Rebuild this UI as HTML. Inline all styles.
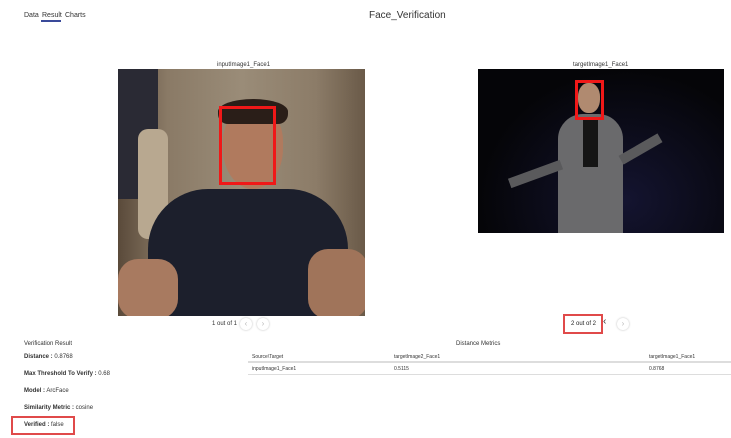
<!DOCTYPE html><html><head><style>
body{margin:0;width:731px;height:438px;background:#fff;font-family:"Liberation Sans",sans-serif;position:relative;overflow:hidden;color:#333}
.a{position:absolute;white-space:nowrap}
.s{font-size:6px}
.b{font-weight:bold}
.circ{position:absolute;width:12px;height:12px;border-radius:50%;background:#fff;box-shadow:0 0 2px #bbb;font-size:8px;color:#bbb;text-align:center;line-height:12px}
</style></head><body>
<div class="a" style="left:24px;top:12px;font-size:7px">Data</div>
<div class="a" style="left:42px;top:12px;font-size:7px;color:#333">Result</div>
<div style="position:absolute;left:41px;top:20px;width:20px;height:1.5px;background:#3a4a9a"></div>
<div class="a" style="left:65px;top:12px;font-size:7px">Charts</div>
<div class="a" style="left:369px;top:10px;font-size:10px;color:#333">Face_Verification</div>

<div class="a s" style="left:217px;top:62px">inputImage1_Face1</div>
<div style="position:absolute;left:118px;top:69px;width:247px;height:247px;background:linear-gradient(90deg,#5a4a3a 0%,#8a7a66 20%,#9a8c78 50%,#8c7c68 80%,#6a5a48 100%);overflow:hidden">
 <div style="position:absolute;left:0;top:0;width:40px;height:130px;background:#2a2a34"></div>
 <div style="position:absolute;left:20px;top:60px;width:30px;height:110px;background:#b8a890;border-radius:10px"></div>
 <div style="position:absolute;left:30px;top:120px;width:200px;height:140px;background:#1c1f2c;border-radius:60px 60px 0 0"></div>
 <div style="position:absolute;left:0;top:190px;width:60px;height:60px;background:#a87a60;border-radius:20px"></div>
 <div style="position:absolute;left:190px;top:180px;width:60px;height:70px;background:#a0745a;border-radius:20px"></div>
 <div style="position:absolute;left:105px;top:40px;width:60px;height:80px;background:#b07a5e;border-radius:40% 40% 50% 50%"></div>
 <div style="position:absolute;left:100px;top:30px;width:70px;height:25px;background:#2a1e18;border-radius:50% 50% 10px 10px"></div>
 <div style="position:absolute;left:101px;top:37px;width:57px;height:79px;border:3px solid #f01818;box-sizing:border-box"></div>
</div>
<div class="a s" style="left:212px;top:321px">1 out of 1</div>
<div class="circ" style="left:240px;top:318px">‹</div>
<div class="circ" style="left:257px;top:318px">›</div>

<div class="a s" style="left:573px;top:62px">targetImage1_Face1</div>
<div style="position:absolute;left:478px;top:69px;width:246px;height:164px;background:radial-gradient(ellipse at 60% 80%,#141430,#050508 70%);overflow:hidden">
 <div style="position:absolute;left:80px;top:45px;width:65px;height:120px;background:#6a6a6c;border-radius:25px 25px 0 0"></div>
 <div style="position:absolute;left:105px;top:48px;width:15px;height:50px;background:#151515"></div>
 <div style="position:absolute;left:30px;top:100px;width:55px;height:10px;background:#5a5a5c;transform:rotate(-20deg)"></div>
 <div style="position:absolute;left:140px;top:75px;width:45px;height:10px;background:#5a5a5c;transform:rotate(-30deg)"></div>
 <div style="position:absolute;left:100px;top:14px;width:22px;height:30px;background:#b08a70;border-radius:45%"></div>
 <div style="position:absolute;left:97px;top:11px;width:29px;height:40px;border:3px solid #f01818;box-sizing:border-box"></div>
</div>
<div style="position:absolute;left:563px;top:314px;width:40px;height:20px;border:2px solid #e04a4a;box-sizing:border-box"></div>
<div class="a s" style="left:571px;top:321px;color:#222">2 out of 2</div>
<div class="a" style="left:603px;top:316px;font-size:10px;color:#333">‹</div>
<div class="circ" style="left:617px;top:318px">›</div>

<div class="a s" style="left:24px;top:341px">Verification Result</div>
<div class="a s" style="left:24px;top:354px"><b>Distance :</b> 0.8768</div>
<div class="a s" style="left:24px;top:371px"><b>Max Threshold To Verify :</b> 0.68</div>
<div class="a s" style="left:24px;top:388px"><b>Model :</b> ArcFace</div>
<div class="a s" style="left:24px;top:405px"><b>Similarity Metric :</b> cosine</div>
<div style="position:absolute;left:11px;top:416px;width:64px;height:19px;border:2px solid #e04a4a;box-sizing:border-box"></div>
<div class="a s" style="left:24px;top:422px"><b>Verified :</b> false</div>

<div class="a s" style="left:456px;top:341px">Distance Metrics</div>
<div class="a" style="left:252px;top:354px;font-size:5px">Source\Target</div>
<div class="a" style="left:394px;top:354px;font-size:5px">targetImage2_Face1</div>
<div class="a" style="left:649px;top:354px;font-size:5px">targetImage1_Face1</div>
<div style="position:absolute;left:248px;top:361px;width:483px;height:1.5px;background:#ddd"></div>
<div class="a" style="left:252px;top:366px;font-size:5px">inputImage1_Face1</div>
<div class="a" style="left:394px;top:366px;font-size:5px">0.5115</div>
<div class="a" style="left:649px;top:366px;font-size:5px">0.8768</div>
<div style="position:absolute;left:248px;top:374px;width:483px;height:1px;background:#ddd"></div>
</body></html>
